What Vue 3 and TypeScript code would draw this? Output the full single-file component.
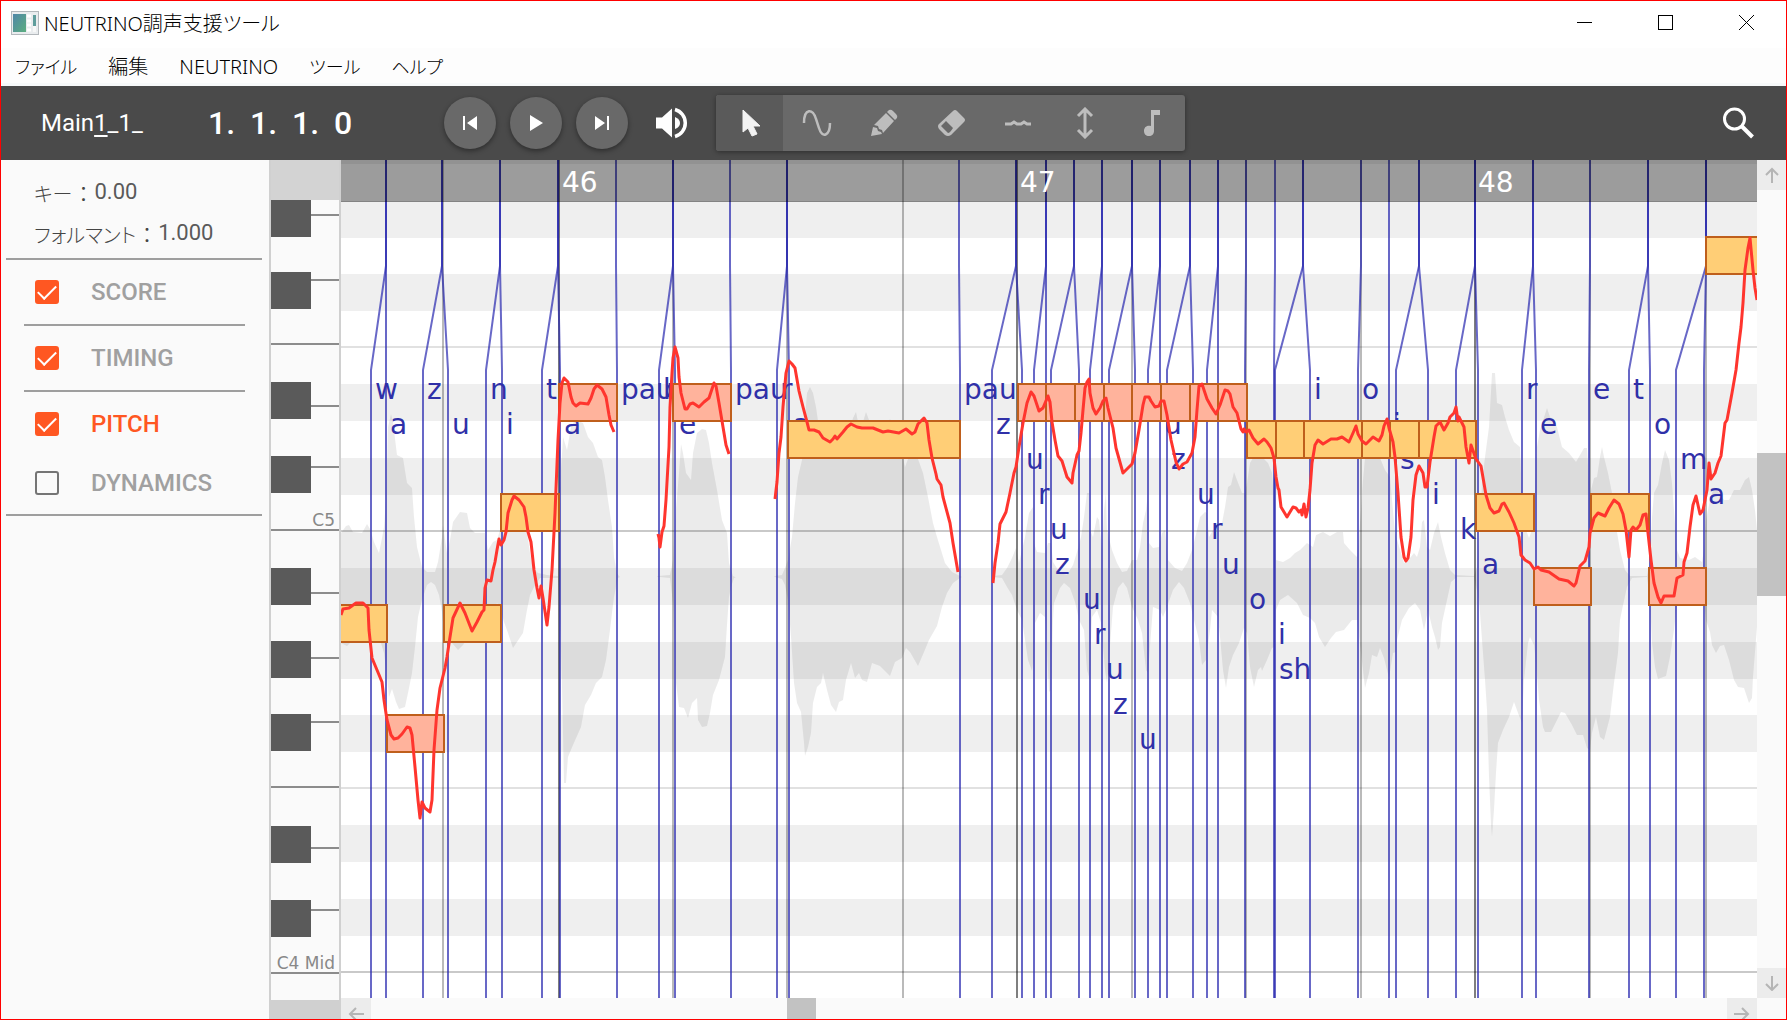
<script setup lang="ts">
import { ref } from 'vue'

interface Layer {
  id: string
  name: string
  shown: boolean
  active: boolean
}

interface Note {
  x: number
  w: number
  row: number
  tone: 'amber' | 'coral'
}

interface Phoneme {
  text: string
  note: number
  time: number
  step: number
}

const menus = [
  { name: 'ファイル', kana: true },
  { name: '編集', kana: false },
  { name: 'NEUTRINO', kana: false },
  { name: 'ツール', kana: true },
  { name: 'ヘルプ', kana: true },
]
const position = ['1.', '1.', '1.', '0']

const layers = ref<Layer[]>([
  { id: 'score', name: 'SCORE', shown: true, active: false },
  { id: 'timing', name: 'TIMING', shown: true, active: false },
  { id: 'pitch', name: 'PITCH', shown: true, active: true },
  { id: 'dynamics', name: 'DYNAMICS', shown: false, active: false },
])

const tools = ['select', 'sine', 'pencil', 'eraser', 'flatten', 'shift', 'note']
const tool = ref('select')

// Song coordinates of the top left corner of the visible roll
const scrollX = 341
const scrollY = 160
const offset = `translate(${-scrollX} ${-scrollY})`
const keyOffset = `translate(-271 ${-scrollY})`

// Shaded rows lie behind the black keys
const shadedRows = [201, 274, 384, 458, 568, 642, 715, 825, 899]
const octaveLines = [
  { y: 347, strong: false },
  { y: 531, strong: true },
  { y: 788, strong: false },
  { y: 972, strong: true },
]
const blackKeys = [200, 272, 382, 456, 568, 641, 714, 826, 900]
const shortEdges = [215, 280, 406, 467, 593, 658, 722, 848, 910]
const longEdges = [344, 530, 787, 973]

const beats = [443, 673, 787, 903, 1132, 1246, 1361, 1590, 1706]
const bars = [
  { x: 559, label: '46' },
  { x: 1017, label: '47' },
  { x: 1475, label: '48' },
]

const phonemeData: [string, number, number, number][] = [
  ['w', 386, 371, 0], ['a', 386, 386, 1], ['z', 442, 423, 0], ['u', 442, 448, 1],
  ['n', 500, 486, 0], ['i', 500, 502, 1], ['t', 558, 542, 0], ['a', 558, 560, 1],
  ['pau', 616, 617, 0], ['b', 673, 659, 0], ['e', 673, 675, 1], ['pau', 730, 731, 0],
  ['r', 787, 777, 0], ['a', 787, 789, 1], ['pau', 959, 960, 0], ['z', 1016, 992, 1],
  ['u', 1016, 1022, 2], ['r', 1046, 1034, 3], ['u', 1046, 1046, 4], ['z', 1074, 1051, 5],
  ['u', 1074, 1079, 6], ['r', 1102, 1090, 7], ['u', 1102, 1102, 8], ['z', 1132, 1109, 9],
  ['u', 1132, 1135, 10], ['r', 1160, 1148, 0], ['u', 1160, 1160, 1], ['z', 1190, 1167, 2],
  ['u', 1190, 1193, 3], ['r', 1218, 1207, 4], ['u', 1218, 1218, 5], ['o', 1246, 1245, 6],
  ['i', 1275, 1274, 7], ['sh', 1303, 1275, 8], ['i', 1303, 1310, 0], ['o', 1361, 1358, 0],
  ['i', 1389, 1389, 1], ['s', 1419, 1396, 2], ['i', 1419, 1428, 3], ['k', 1475, 1456, 4],
  ['a', 1475, 1478, 5], ['r', 1533, 1522, 0], ['e', 1533, 1536, 1], ['e', 1590, 1589, 0],
  ['t', 1648, 1629, 0], ['o', 1648, 1650, 1], ['m', 1706, 1676, 2], ['a', 1706, 1704, 3],
]
const phonemes: Phoneme[] = phonemeData.map(([text, note, time, step]) => ({ text, note, time, step }))

// Score position at the top, bent over to the sung position below
const timingLine = (p: Phoneme) =>
  `${p.note},160 ${p.note},266 ${p.time},370 ${p.time},2000`

const noteData: [number, number, number, 'a' | 'c'][] = [
  [330, 387, 605, 'a'], [387, 444, 715, 'c'], [444, 501, 605, 'a'], [501, 559, 494, 'a'],
  [559, 617, 384, 'c'], [673, 731, 384, 'c'], [788, 960, 421, 'a'],
  [1018, 1046, 384, 'c'], [1046, 1075, 384, 'c'], [1075, 1104, 384, 'c'], [1104, 1132, 384, 'c'],
  [1132, 1161, 384, 'c'], [1161, 1190, 384, 'c'], [1190, 1218, 384, 'c'], [1218, 1247, 384, 'c'],
  [1247, 1276, 421, 'a'], [1276, 1304, 421, 'a'], [1304, 1362, 421, 'a'], [1362, 1390, 421, 'a'],
  [1390, 1419, 421, 'a'], [1419, 1476, 421, 'a'], [1476, 1534, 494, 'a'], [1534, 1591, 568, 'c'],
  [1591, 1649, 494, 'a'], [1649, 1706, 568, 'c'], [1706, 1766, 237, 'a'],
]
const notes: Note[] = noteData.map(([from, to, row, tone]) => ({
  x: from,
  w: to - from,
  row,
  tone: tone === 'a' ? 'amber' : 'coral',
}))

const pitch = [
  '341,615 343,609 349,608 356,603 363,603 368,608 369,630 372,658 377,670 382,682 384,700 387,720 391,735 394,739 398,738 402,734 407,727 410,728 412,735 415,767 418,800 420,818 422,802 425,808 430,812 432,800 434,750 437,710 440,688 445,668 447,657 450,637 453,618 460,603 465,613 472,631 477,622 482,612 484,610 485,588 487,580 491,581 493,570 495,562 497,550 499,539 501,545 504,540 506,532 508,513 512,500 514,496 519,500 524,507 526,517 528,532 531,542 534,570 537,588 539,598 541,586 543,598 547,625 549,607 552,570 555,513 558,440 560,403 562,383 564,378 568,382 571,397 573,403 576,406 580,403 588,404 591,398 594,389 597,385 602,389 606,397 609,415 611,425 614,432',
  '658,534 659,538 660,547 662,532 664,526 666,500 669,447 670,407 672,373 673,358 675,347 678,358 679,377 681,393 685,409 687,409 690,404 693,403 699,407 704,402 709,398 714,383 716,386 719,403 723,427 726,445 729,454',
  '775,499 777,482 779,453 781,437 783,407 786,373 789,361 792,364 795,368 799,391 803,407 807,422 809,430 814,430 819,432 823,438 830,442 833,439 835,436 837,439 843,432 847,427 851,424 857,427 862,428 873,428 883,432 888,431 899,433 906,429 912,434 915,432 918,424 924,418 927,423 929,440 932,458 936,474 937,479 941,485 943,497 950,523 953,543 958,572',
  '993,583 995,563 998,543 1000,524 1006,512 1010,493 1014,473 1016,467 1019,447 1023,423 1027,403 1031,392 1034,396 1039,411 1043,408 1048,396 1050,402 1052,422 1055,440 1058,456 1062,461 1067,477 1072,483 1073,473 1077,455 1079,451 1081,433 1083,410 1085,388 1087,382 1089,379 1090,393 1093,408 1096,414 1100,408 1103,401 1106,398 1108,408 1113,428 1116,448 1123,473 1127,469 1132,464 1135,453 1139,430 1143,405 1145,397 1149,397 1151,401 1155,407 1159,406 1161,401 1164,401 1167,415 1171,440 1176,462 1179,469 1183,464 1187,462 1192,453 1195,437 1197,410 1199,386 1202,384 1207,399 1212,408 1216,414 1220,405 1225,390 1228,391 1230,394 1233,407 1237,413 1241,429 1243,432 1244,429 1246,432 1249,430 1253,438 1258,444 1264,439 1267,442 1271,448 1274,458 1276,477 1278,488 1279,490 1281,507 1287,517 1293,507 1296,508 1299,512 1301,510 1302,515 1304,504 1306,517 1308,508 1310,490 1312,463 1315,445 1318,440 1323,444 1331,439 1337,439 1342,437 1349,442 1353,433 1356,426 1358,434 1362,441 1366,444 1373,437 1379,441 1382,435 1384,426 1387,419 1389,428 1393,442 1395,457 1398,493 1401,537 1404,557 1406,561 1408,558 1411,537 1413,500 1416,475 1419,466 1423,473 1425,487 1427,487 1430,462 1434,437 1436,426 1440,422 1444,430 1448,423 1450,417 1454,413 1456,407 1458,421 1459,417 1464,427 1466,447 1469,463 1471,445 1476,459 1481,466 1486,495 1490,508 1494,513 1499,511 1502,504 1504,503 1509,512 1514,523 1519,537 1521,555 1525,560 1530,563 1534,569 1538,567 1541,570 1549,572 1559,579 1568,581 1574,586 1576,583 1580,566 1585,561 1589,547 1590,533 1594,518 1598,513 1605,516 1609,508 1614,500 1619,504 1623,514 1626,530 1629,557 1631,530 1633,527 1636,530 1640,525 1643,515 1646,514 1648,533 1651,560 1654,583 1658,597 1661,603 1664,596 1669,596 1674,596 1677,578 1683,575 1684,562 1687,553 1690,527 1693,505 1696,496 1700,514 1703,510 1707,490 1709,463 1711,479 1715,473 1718,463 1721,456 1725,423 1727,420 1732,393 1736,370 1739,343 1741,327 1743,303 1745,270 1748,248 1750,238 1753,270 1755,288 1757,300',
]

// Upper and lower edge of the voice waveform
const waveTop =
  '341,533 346,526 349,525 353,532 362,533 367,524 370,529 374,542 379,553 382,538 384,527 386,500 388,427 391,414 393,422 397,455 403,458 407,483 412,488 414,517 417,547 422,567 427,572 435,572 438,562 442,537 443,525 447,553 450,540 453,522 460,512 467,513 470,528 475,533 485,533 488,550 493,542 497,540 503,520 527,532 530,553 533,568 538,573 547,575 558,576 561,470 563,437 567,450 571,427 575,420 583,423 588,437 593,443 598,457 602,460 605,477 608,500 612,527 614,557 617,573 619,576 620,577 657,577 658,576 670,575 673,560 675,520 677,497 679,473 681,444 683,453 686,473 691,480 693,453 697,433 702,429 706,430 709,443 712,463 717,490 722,520 727,533 729,563 733,576 735,577 774,577 775,576 782,575 785,568 788,560 792,537 795,503 798,477 802,460 805,417 807,393 810,387 813,393 816,407 818,421 822,425 851,425 853,418 856,412 858,422 863,422 866,412 869,420 872,423 888,423 890,419 893,425 903,458 905,467 908,459 918,459 923,473 928,497 933,523 937,537 941,550 945,563 952,572 960,576 962,577 992,577 993,576 1002,575 1007,568 1012,558 1016,548 1019,563 1022,550 1025,537 1029,513 1033,507 1034,543 1037,552 1045,553 1048,543 1051,543 1053,562 1060,573 1067,575 1073,565 1077,552 1081,537 1084,517 1087,493 1089,493 1090,530 1093,537 1097,517 1099,520 1102,550 1104,510 1106,493 1107,530 1112,550 1117,563 1122,572 1127,571 1132,560 1137,560 1140,547 1143,523 1146,510 1148,493 1149,543 1153,548 1159,547 1162,533 1165,530 1168,560 1175,568 1182,571 1187,563 1192,550 1197,530 1200,517 1205,512 1207,513 1209,537 1213,530 1218,527 1222,523 1225,507 1228,487 1231,485 1234,472 1237,480 1242,493 1245,493 1247,483 1250,463 1253,458 1263,458 1268,463 1272,473 1274,497 1276,560 1283,562 1290,558 1295,553 1300,550 1307,543 1313,547 1316,535 1323,532 1330,536 1337,532 1343,532 1344,543 1350,550 1357,557 1359,537 1361,510 1363,480 1365,458 1380,458 1385,470 1390,477 1395,533 1404,563 1410,558 1414,553 1417,557 1420,547 1422,522 1424,520 1427,547 1430,550 1434,533 1438,522 1441,537 1445,553 1450,570 1455,575 1474,576 1477,567 1480,527 1482,483 1485,457 1489,427 1492,373 1495,373 1497,403 1502,405 1505,417 1509,430 1514,442 1520,447 1522,500 1525,527 1529,538 1532,530 1535,493 1537,447 1540,430 1547,408 1550,417 1557,427 1562,447 1569,453 1576,462 1584,448 1587,448 1590,500 1591,490 1594,478 1597,477 1600,457 1602,447 1604,457 1608,473 1612,493 1615,520 1620,550 1625,570 1630,576 1647,576 1650,560 1652,517 1654,493 1658,485 1662,463 1665,450 1669,460 1672,483 1674,510 1677,550 1680,558 1689,560 1695,557 1702,562 1704,550 1706,520 1710,500 1714,487 1719,493 1724,500 1729,500 1734,490 1740,490 1745,480 1749,477 1752,490 1755,510 1757,530'
const waveBottom =
  '341,643 347,646 353,640 380,640 384,653 387,677 389,697 392,689 396,702 399,709 405,707 408,693 412,673 415,647 418,617 422,600 427,585 431,582 435,585 439,595 442,612 444,633 452,643 458,650 463,645 470,635 488,623 497,603 500,607 504,622 508,633 513,648 517,642 523,633 527,610 530,595 534,587 540,578 558,578 561,640 563,735 564,783 566,783 568,757 573,745 581,727 585,705 591,695 596,683 602,677 606,660 610,630 612,613 614,597 616,587 618,578 620,577 660,577 670,578 673,603 676,683 679,707 684,708 688,718 692,703 697,698 698,720 702,727 707,726 710,713 713,695 719,680 725,657 727,625 729,597 731,587 734,578 736,577 775,577 782,579 785,585 788,600 791,637 794,683 797,703 801,712 804,743 805,756 808,747 811,733 813,703 817,687 821,683 823,673 827,690 831,705 836,712 839,702 843,700 846,680 851,663 855,678 859,673 862,680 867,682 872,663 880,666 890,676 895,662 902,658 906,648 910,652 918,666 924,652 929,640 937,626 942,607 947,593 953,583 960,578 962,577 993,577 1002,578 1007,587 1012,595 1017,610 1022,620 1025,640 1028,660 1032,671 1034,657 1035,623 1040,613 1045,617 1046,627 1049,692 1051,690 1053,620 1054,603 1060,588 1064,583 1070,588 1075,602 1079,620 1084,630 1087,670 1090,680 1091,640 1092,617 1097,610 1101,623 1105,670 1107,683 1111,633 1113,607 1118,588 1123,582 1127,588 1132,607 1138,620 1142,633 1146,670 1148,673 1151,633 1153,607 1160,610 1163,617 1167,607 1173,590 1179,582 1184,588 1190,603 1194,620 1199,640 1202,665 1206,660 1210,630 1212,610 1218,617 1220,637 1223,670 1226,688 1229,667 1233,655 1239,643 1244,628 1247,633 1250,667 1254,687 1258,670 1261,667 1262,671 1267,660 1272,648 1274,647 1276,610 1280,600 1288,595 1297,603 1303,615 1310,618 1315,623 1319,637 1325,647 1331,638 1336,632 1344,630 1352,620 1357,620 1361,653 1365,688 1369,673 1372,655 1377,657 1380,648 1384,658 1389,678 1393,653 1396,652 1397,640 1402,620 1409,608 1415,603 1420,610 1424,630 1428,610 1432,627 1435,637 1438,650 1440,647 1442,623 1447,600 1451,582 1457,577 1474,577 1479,600 1482,640 1485,680 1487,710 1489,777 1491,825 1492,837 1494,810 1496,773 1498,743 1503,730 1509,717 1514,702 1518,713 1522,723 1524,680 1528,643 1530,637 1534,645 1536,663 1539,700 1543,727 1545,732 1551,732 1556,722 1561,712 1565,713 1572,725 1577,735 1583,735 1587,748 1590,750 1592,733 1596,717 1600,737 1604,740 1610,717 1614,683 1618,653 1620,620 1622,610 1627,587 1632,578 1647,577 1650,600 1652,643 1655,667 1658,679 1666,676 1670,657 1674,630 1677,603 1704,600 1706,620 1710,632 1712,645 1716,653 1720,646 1724,645 1729,660 1734,680 1738,687 1744,688 1749,703 1752,698 1753,677 1757,627'
const wave = `${waveTop} ${waveBottom.split(' ').reverse().join(' ')}`
</script>

<template>
  <div class="window">
    <header class="titlebar">
      <svg class="app-icon" width="28" height="24" viewBox="0 0 28 24" aria-hidden="true">
        <defs>
          <linearGradient id="pane" x1="0" y1="0" x2="1" y2="1">
            <stop offset="0" stop-color="#4f86a8" />
            <stop offset="1" stop-color="#5cae80" />
          </linearGradient>
        </defs>
        <rect x="0.5" y="0.5" width="27" height="23" fill="#e9ecee" stroke="#b3b8bc" />
        <rect x="2" y="3" width="13" height="18" fill="url(#pane)" />
        <path d="M16 5h4M16 10h4M16 14h4M16 19h4" stroke="#fff" stroke-width="3" />
        <rect x="22" y="4" width="3" height="11" fill="#5f9d9c" />
        <rect x="22" y="15" width="3" height="6" fill="#f7f8f8" />
      </svg>
      <h1 class="title">NEUTRINO調声支援<span class="kana">ツール</span></h1>
      <div class="window-buttons">
        <button type="button" aria-label="最小化">
          <svg width="16" height="16"><path d="M0 7.500h15" stroke="#000" /></svg>
        </button>
        <button type="button" aria-label="最大化">
          <svg width="16" height="16"><rect x="0.500" y="0.500" width="14" height="14" fill="none" stroke="#000" /></svg>
        </button>
        <button type="button" aria-label="閉じる">
          <svg width="16" height="16"><path d="M0 0l15 15M15 0L0 15" stroke="#000" /></svg>
        </button>
      </div>
    </header>

    <nav class="menubar">
      <button v-for="m in menus" :key="m.name" type="button" :class="{ kana: m.kana }">{{ m.name }}</button>
    </nav>

    <div class="toolbar">
      <div class="track">Main<u>1</u>_1_</div>
      <div class="position">
        <span v-for="(p, i) in position" :key="i">{{ p }}</span>
      </div>
      <div class="transport">
        <button type="button" class="round" aria-label="先頭へ">
          <svg width="18" height="18" viewBox="0 0 18 18"><path d="M2 2h2v14H2zM16 2v14L6 9z" fill="#fff" /></svg>
        </button>
        <button type="button" class="round" aria-label="再生">
          <svg width="18" height="18" viewBox="0 0 18 18"><path d="M3 1v16l13-8z" fill="#fff" /></svg>
        </button>
        <button type="button" class="round" aria-label="末尾へ">
          <svg width="18" height="18" viewBox="0 0 18 18"><path d="M14 2h2v14h-2zM2 2v14l10-7z" fill="#fff" /></svg>
        </button>
      </div>
      <button type="button" class="plain" aria-label="音量">
        <svg width="34" height="32" viewBox="0 0 34 32">
          <path d="M1 10.500h6L17 1.500v29l-10-9H1z" fill="#fff" />
          <path d="M20 10q5 2 5 6t-5 6z" fill="#fff" />
          <path d="M20 2.500a14 14 0 0 1 0 27" fill="none" stroke="#fff" stroke-width="3.500" />
        </svg>
      </button>
      <div class="tools">
        <button
          v-for="t in tools"
          :key="t"
          type="button"
          :class="{ chosen: tool === t }"
          :aria-label="t"
          :aria-pressed="tool === t"
          @click="tool = t"
        >
          <svg v-if="t === 'select'" width="32" height="32" viewBox="0 0 32 32">
            <path d="M9 3v22l5-4 4 8 5-2-4-8h7z" fill="currentColor" stroke="currentColor" stroke-linejoin="round" />
          </svg>
          <svg v-else-if="t === 'sine'" width="32" height="32" viewBox="0 0 32 32">
            <path d="M3 16C3 1 12 1 15 12l3 9c3 11 11 8 11-5" fill="none" stroke="currentColor" stroke-width="2.500" />
          </svg>
          <svg v-else-if="t === 'pencil'" width="32" height="32" viewBox="0 0 32 32">
            <path d="M3 29l2-9 4 1 1 3 3 1 1 2zM6 18L18 6l8 8-11 12-1-3-3-1-1-3zM19 5l2-2q2-1 4 1l3 3q2 2 1 4l-2 2z" fill="currentColor" />
          </svg>
          <svg v-else-if="t === 'eraser'" width="32" height="32" viewBox="0 0 32 32">
            <path fill-rule="evenodd" d="M18 4q2-2 4 0l7 7q2 2 0 4L16 28q-3 2-6 0l-6-6q-2-3 0-5zM11 14l-5 5 7 7q2 0 5-5z" fill="currentColor" />
          </svg>
          <svg v-else-if="t === 'flatten'" width="32" height="32" viewBox="0 0 32 32">
            <path d="M3 17h6l3-2 3 2h4l3-2 3 2h4" fill="none" stroke="currentColor" stroke-width="3" />
          </svg>
          <svg v-else-if="t === 'shift'" width="32" height="32" viewBox="0 0 32 32">
            <path d="M16 2v28M9 9l7-7 7 7M9 23l7 7 7-7" fill="none" stroke="currentColor" stroke-width="3" />
          </svg>
          <svg v-else width="32" height="32" viewBox="0 0 32 32">
            <path d="M15 3h9v5h-6v16c0 3-2 5-5 5s-5-2-5-5 2-6 7-5z" fill="currentColor" />
          </svg>
        </button>
      </div>
      <button type="button" class="plain search" aria-label="検索">
        <svg width="32" height="32" viewBox="0 0 32 32">
          <circle cx="12.500" cy="12" r="10" fill="none" stroke="#fff" stroke-width="3" />
          <path d="M20 19.500L30.500 30" stroke="#fff" stroke-width="4" />
        </svg>
      </button>
    </div>

    <main class="workspace">
      <aside class="sidebar">
        <dl class="values">
          <div><dt><span class="kana">キー</span>：</dt><dd>0.00</dd></div>
          <div><dt><span class="kana">フォルマント</span>：</dt><dd>1.000</dd></div>
        </dl>
        <ul class="layers">
          <li v-for="l in layers" :key="l.id">
            <label :class="{ active: l.active }">
              <input v-model="l.shown" type="checkbox" />
              <span>{{ l.name }}</span>
            </label>
          </li>
        </ul>
      </aside>

      <section class="keyboard" aria-label="鍵盤">
        <svg class="keys">
          <g :transform="keyOffset">
            <rect x="271" y="160" width="68" height="40" fill="#d3d3d3" />
            <path v-for="y in longEdges" :key="y" :d="`M271 ${y}h68`" class="edge" />
            <path v-for="y in shortEdges" :key="y" :d="`M311 ${y}h28`" class="edge" />
            <rect v-for="y in blackKeys" :key="y" x="271" :y="y" width="40" height="37" fill="#5a5a5a" />
            <text x="335" y="526" class="key-name">C5</text>
            <text x="335" y="969" class="key-name">C4 Mid</text>
          </g>
        </svg>
        <div class="keyboard-foot"></div>
      </section>

      <section class="editor" aria-label="ピアノロール">
        <div class="editor-row">
          <svg class="roll">
            <rect v-for="y in shadedRows" :key="y" x="0" :y="y - scrollY" width="100%" height="37" fill="#efefef" />
            <rect
              v-for="l in octaveLines"
              :key="l.y"
              x="0"
              :y="l.y - scrollY - 1"
              width="100%"
              height="2"
              :fill="l.strong ? '#c9c9c9' : '#e1e1e1'"
            />
            <g :transform="offset">
              <rect v-for="x in beats" :key="x" :x="x - 1" y="160" width="2" height="2000" class="beat" />
              <rect v-for="b in bars" :key="b.x" :x="b.x - 1" y="160" width="2" height="2000" class="bar" />
              <polygon :points="wave" fill="#000" fill-opacity="0.080" />
              <polyline v-for="(p, i) in phonemes" :key="i" :points="timingLine(p)" class="timing" />
              <text v-for="(p, i) in phonemes" :key="i" :x="p.time + 4" :y="399 + p.step * 35" class="phoneme">{{ p.text }}</text>
              <rect v-for="n in notes" :key="n.x" :x="n.x" :y="n.row" :width="n.w" height="37" class="note" :class="n.tone" />
              <polyline v-for="(p, i) in pitch" :key="i" :points="p" class="pitch" />
            </g>
            <rect x="0" y="0" width="100%" height="42" fill="#000" fill-opacity="0.390" />
            <rect x="0" y="0" width="100%" height="4" fill="#000" fill-opacity="0.060" />
            <rect x="0" y="41" width="100%" height="1" fill="#000" fill-opacity="0.100" />
            <g :transform="offset">
              <text v-for="b in bars" :key="b.x" :x="b.x + 3" y="192" class="bar-number">{{ b.label }}</text>
            </g>
          </svg>
          <div class="scroll vertical">
            <button type="button" aria-label="上へ">
              <svg width="16" height="16" viewBox="0 0 16 16"><path d="M8 16V2M2 8l6-6 6 6" /></svg>
            </button>
            <div class="rail"><div class="thumb"></div></div>
            <button type="button" aria-label="下へ">
              <svg width="16" height="16" viewBox="0 0 16 16"><path d="M8 1v14M2 9l6 6 6-6" /></svg>
            </button>
          </div>
        </div>
        <div class="scroll horizontal">
          <button type="button" aria-label="左へ">
            <svg width="16" height="16" viewBox="0 0 16 16"><path d="M16 9H2M8 3L2 9l6 6" /></svg>
          </button>
          <div class="rail"><div class="thumb"></div></div>
          <button type="button" aria-label="右へ">
            <svg width="16" height="16" viewBox="0 0 16 16"><path d="M0 9h14M8 3l6 6-6 6" /></svg>
          </button>
        </div>
      </section>
    </main>
  </div>
</template>

<style>
body {
  margin: 0;
}
</style>

<style scoped>
* {
  box-sizing: border-box;
}

.window {
  display: flex;
  flex-direction: column;
  height: 100vh;
  overflow: hidden;
  border: 1px solid #f00;
  background: #fafafa;
  font-family: Roboto, 'Noto Sans CJK JP', sans-serif;
}

button {
  display: flex;
  align-items: center;
  justify-content: center;
  padding: 0;
  border: 0;
  background: none;
  color: inherit;
  font: inherit;
}

svg {
  display: block;
}

.kana {
  font-size: 18px;
  font-feature-settings: 'palt';
}

.titlebar {
  display: flex;
  flex: none;
  align-items: center;
  height: 47px;
  padding-left: 10px;
  background: #fff;
}

.app-icon {
  margin-bottom: 3px;
}

.title {
  margin: 0 0 2px 5px;
  color: #000;
  font: 300 20px/28px 'Noto Sans', 'Noto Sans CJK JP', sans-serif;
}

.title .kana {
  font-size: 20px;
}

.window-buttons {
  display: flex;
  align-self: stretch;
  margin-left: auto;
  padding-bottom: 3px;
}

.window-buttons button {
  width: 81px;
  padding-left: 2px;
}

.menubar {
  display: flex;
  flex: none;
  gap: 31px;
  height: 38px;
  padding: 3px 0 0 14px;
  border-bottom: 3px solid #f7f9fa;
  background: #fdfdfd;
  color: #000;
  font: 300 20px/28px 'Noto Sans', 'Noto Sans CJK JP', sans-serif;
}

.toolbar {
  display: flex;
  flex: none;
  align-items: center;
  height: 74px;
  padding: 0 32px 0 40px;
  background: #4a4a4a;
  color: #fff;
}

.track {
  width: 167px;
  font-size: 24px;
}

.track u {
  text-underline-offset: 4px;
}

.position {
  display: flex;
  width: 236px;
  font-size: 32px;
  font-weight: 500;
}

.position span {
  width: 42px;
}

.transport {
  display: flex;
  gap: 14px;
  margin-right: 27px;
}

.round {
  width: 52px;
  height: 52px;
  border-radius: 50%;
  background: #696969;
  box-shadow: 0 2px 5px rgba(0, 0, 0, 0.4);
}

.tools {
  display: flex;
  height: 56px;
  margin-left: 27px;
  overflow: hidden;
  border-radius: 3px;
  background: #696969;
  box-shadow: 0 1px 5px rgba(0, 0, 0, 0.4);
  color: #bdbdbd;
}

.tools button {
  width: 67px;
}

.tools .chosen {
  background: #5a5a5a;
  color: #f2f2f2;
}

.search {
  margin-left: auto;
}

.workspace {
  display: flex;
  flex: 1;
  min-height: 0;
}

.sidebar {
  flex: none;
  width: 268px;
  padding: 0 7px 0 5px;
}

.values {
  margin: 0;
  padding: 11px 0 5px 28px;
  border-bottom: 2px solid #9e9e9e;
  color: #5a5a5a;
}

.values div {
  display: flex;
  align-items: center;
  height: 41px;
}

.values dt {
  color: #444;
  font-size: 22px;
  font-weight: 300;
}

.values .kana {
  font-size: 20px;
}

.values dd {
  margin: 0;
  font-size: 22px;
}

.layers {
  margin: 0;
  padding: 0 0 5px;
  border-bottom: 2px solid #9e9e9e;
  list-style: none;
}

.layers li {
  height: 66px;
  margin: 0 17px 0 18px;
  border-bottom: 2px solid #9e9e9e;
}

.layers li:nth-child(3) {
  height: 64px;
  border-bottom: 0;
}

.layers li:nth-child(4) {
  height: 53px;
  border-bottom: 0;
}

.layers label {
  display: flex;
  align-items: center;
  gap: 32px;
  height: 100%;
  padding-left: 11px;
  color: #a0a0a0;
  font-size: 24px;
  font-weight: 500;
}

.layers .active {
  color: #ff5722;
}

.layers input {
  position: relative;
  width: 24px;
  height: 24px;
  margin: 0;
  border: 2px solid #757575;
  border-radius: 3px;
  appearance: none;
}

.layers input:checked {
  border-color: #ff5722;
  background: #ff5722;
}

.layers input:checked::after {
  position: absolute;
  top: -1px;
  left: 5px;
  width: 8px;
  height: 16px;
  border: solid #fff;
  border-width: 0 2px 2px 0;
  content: '';
  transform: rotate(45deg);
}

.keyboard {
  display: flex;
  flex: none;
  flex-direction: column;
  width: 72px;
  border: solid #d0d0d0;
  border-width: 0 2px;
}

.keys {
  flex: 1;
  width: 100%;
  min-height: 0;
}

.keyboard-foot {
  height: 19px;
  background: #d0d0d0;
}

.edge {
  stroke: #8c8c8c;
  stroke-width: 2;
}

.key-name {
  fill: #888;
  font: 17px 'DejaVu Sans', sans-serif;
  text-anchor: end;
}

.editor {
  display: flex;
  flex: 1;
  flex-direction: column;
  min-width: 0;
}

.editor-row {
  display: flex;
  flex: 1;
  min-height: 0;
}

.roll {
  flex: 1;
  min-width: 0;
  height: 100%;
  background: #fff;
}

.beat {
  fill: rgba(0, 0, 0, 0.27);
}

.bar {
  fill: rgba(0, 0, 0, 0.5);
}

.timing {
  fill: none;
  stroke: rgba(40, 40, 175, 0.7);
  stroke-width: 2;
}

.phoneme {
  fill: #3030a8;
  font: 28px 'DejaVu Sans', sans-serif;
}

.bar-number {
  fill: #fff;
  font: 28px 'DejaVu Sans', sans-serif;
}

.note {
  stroke: #bf5f1c;
  stroke-width: 2;
}

.amber {
  fill: #ffce76;
}

.coral {
  fill: #ffb39c;
}

.pitch {
  fill: none;
  stroke: #ff352e;
  stroke-width: 3;
  stroke-linejoin: round;
}

.scroll {
  display: flex;
  flex: none;
  overflow: hidden;
  background: #fafafa;
}

.scroll button {
  flex: none;
  width: 30px;
  height: 30px;
  background: #ececec;
}

.scroll path {
  fill: none;
  stroke: #b5b5b5;
  stroke-width: 2;
}

.rail {
  display: flex;
  flex: 1;
}

.thumb {
  flex: none;
  background: #c2c2c2;
}

.vertical {
  flex-direction: column;
  width: 29px;
}

.vertical .rail {
  flex-direction: column;
  padding-top: 263px;
}

.vertical .thumb {
  height: 143px;
}

.horizontal {
  height: 21px;
  margin-right: 29px;
}

.horizontal .rail {
  padding-left: 416px;
}

.horizontal .thumb {
  width: 29px;
  height: 30px;
}
</style>
